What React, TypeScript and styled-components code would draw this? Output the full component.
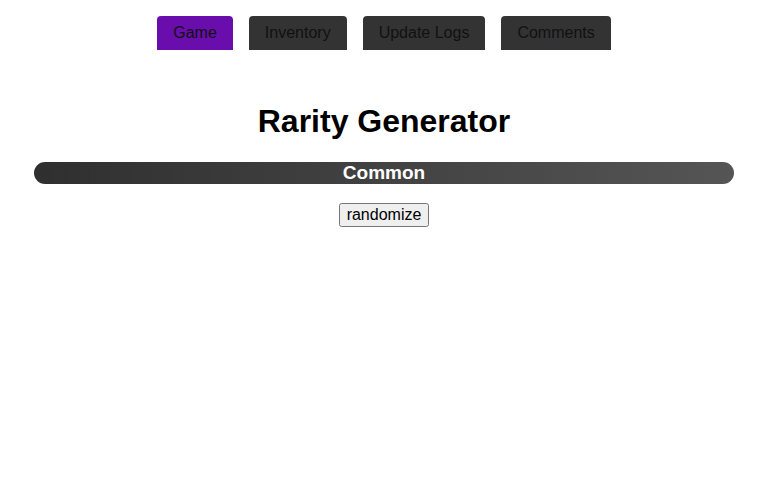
import React, { useState } from "react";
import styled, { createGlobalStyle } from "styled-components";

const tabs = ["Game", "Inventory", "Update Logs", "Comments"];

function App() {
  const [active, setActive] = useState("Game");
  const [rarity, setRarity] = useState("Common");

  const randomize = () => {
    const pool = ["Common", "Uncommon", "Rare", "Epic", "Legendary"];
    setRarity(pool[Math.floor(Math.random() * pool.length)]);
  };

  return (
    <>
      <GlobalStyle />
      <Nav>
        {tabs.map((tab) => (
          <Tab key={tab} $active={tab === active} onClick={() => setActive(tab)}>
            {tab}
          </Tab>
        ))}
      </Nav>
      <Main>
        <Title>Rarity Generator</Title>
        <RarityBar>{rarity}</RarityBar>
        <RollButton onClick={randomize}>randomize</RollButton>
      </Main>
    </>
  );
}

const GlobalStyle = createGlobalStyle`
  body {
    margin: 0;
    background: #fff;
    font-family: "Liberation Sans", Arial, sans-serif;
  }
`;

const Nav = styled.nav`
  display: flex;
  justify-content: center;
  gap: 16px;
  padding-top: 16px;
`;

const Tab = styled.button<{ $active: boolean }>`
  height: 34px;
  padding: 0 16px;
  border: none;
  border-radius: 4px 4px 0 0;
  background: ${(p) => (p.$active ? "#6a0dad" : "#333")};
  color: #111;
  font-family: "Liberation Sans", Arial, sans-serif;
  font-size: 16px;
  cursor: pointer;
`;

const Main = styled.main`
  display: flex;
  flex-direction: column;
  align-items: center;
  padding: 0 34px;
`;

const Title = styled.h1`
  margin: 53px 0 22px;
  font-size: 32px;
  line-height: 37px;
  font-weight: bold;
`;

const RarityBar = styled.div`
  align-self: stretch;
  height: 22px;
  border-radius: 11px;
  background: linear-gradient(to right, #2f2f2f, #555);
  color: #fff;
  font-size: 19px;
  font-weight: bold;
  line-height: 22px;
  text-align: center;
`;

const RollButton = styled.button`
  margin-top: 19px;
  padding: 1px 6px;
  font-family: "Liberation Sans", Arial, sans-serif;
  font-size: 16px;
`;

export default App;
